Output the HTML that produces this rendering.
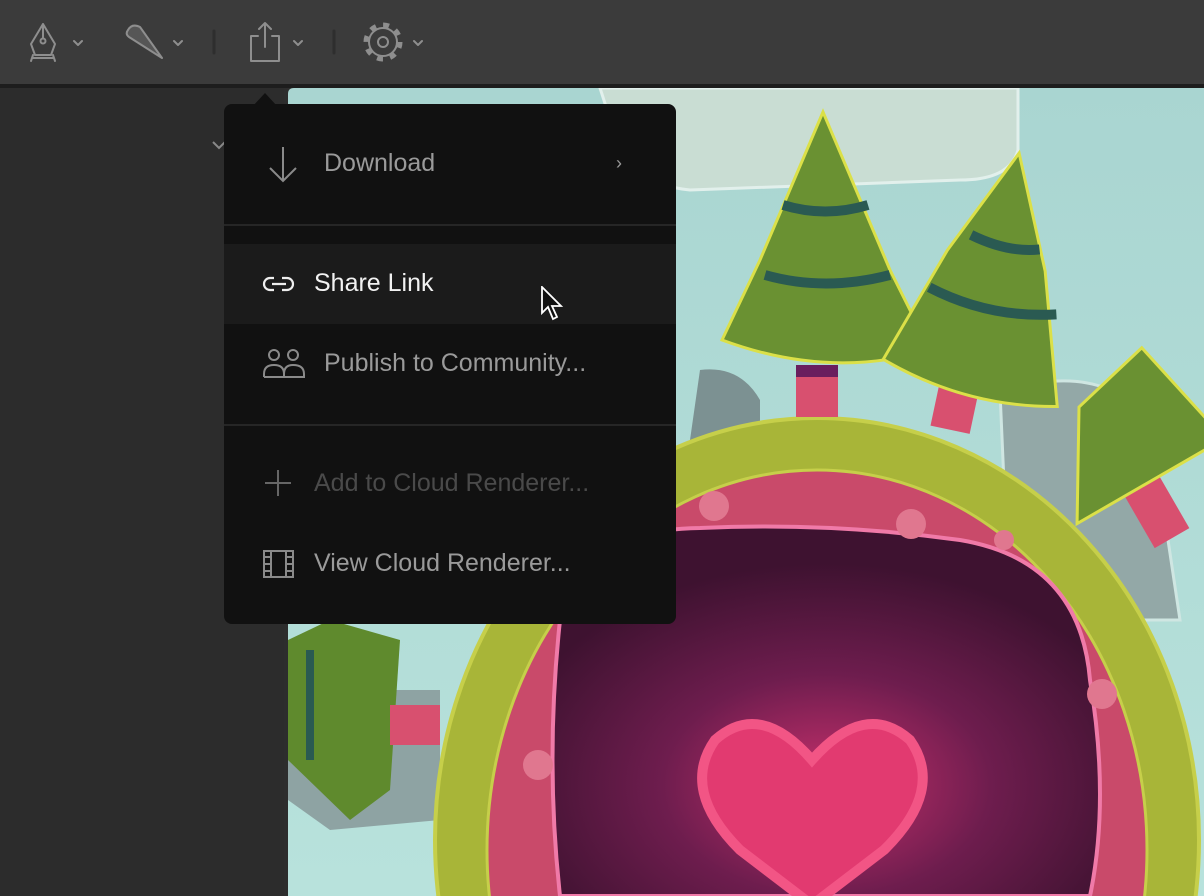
<!DOCTYPE html>
<html style="overflow:hidden"><head><style>
html,body{overflow:hidden}
body{margin:0;width:1204px;height:896px;background:#2d2d2d;font-family:"Liberation Sans",sans-serif;position:relative}
.tb{position:absolute;left:0;top:0;width:1204px;height:84px;background:#3b3b3b}
.line{position:absolute;left:0;top:84px;width:1204px;height:4px;background:#1d1d1d}
.side{position:absolute;left:0;top:88px;width:284px;height:808px;background:#2c2c2c}
.menu{position:absolute;left:224px;top:104px;width:452px;height:520px;background:#111;border-radius:8px;overflow:hidden}
.row{position:absolute;left:0;width:452px;height:80px;font-size:25px;color:#9a9a9a}
.row span{position:absolute;top:25px;white-space:nowrap}
.row svg{position:absolute}
.sep{position:absolute;left:0;width:452px;height:2px;background:#262626}
</style></head><body>
<div class="tb">
<svg width="450" height="84" viewBox="0 0 450 84" fill="none" stroke="#8e8e8e" stroke-width="2" stroke-linecap="round" stroke-linejoin="round">
<path d="M43 24 L31 44 L35 55 L51 55 L55 44 Z M43 24 V38"/><circle cx="43" cy="41" r="2.5"/><path d="M31 61 L33 55 M55 61 L53 55 M33 58 H53"/>
<path d="M74 41 l4 4 4-4 M174 41 l4 4 4-4 M294 41 l4 4 4-4 M414 41 l4 4 4-4"/>
<path d="M128 30 Q132 23 140 27 L162 58 L129 37 Q125 34 128 30Z" fill="#565656"/>
<path d="M214 31 V53 M334 31 V53" stroke="#2e2e2e" stroke-width="3"/>
<path d="M258 36 H251 V61 H279 V36 H272 M265 23 V47 M259 29 L265 23 271 29"/>
<circle cx="383" cy="42" r="17" stroke-width="5" stroke-dasharray="6 7.35" stroke-linecap="butt"/>
<circle cx="383" cy="42" r="14" fill="#3b3b3b"/>
<circle cx="383" cy="42" r="5"/>
</svg>
</div>
<div class="line"></div>
<div class="side"><svg width="20" height="20" style="position:absolute;left:210px;top:48px"><path d="M3 6 l6 6 6-6" stroke="#888" stroke-width="2" fill="none"/></svg></div>
<svg width="916" height="808" viewBox="288 88 916 808" style="position:absolute;left:288px;top:88px;overflow:hidden">
<defs><radialGradient id="in" cx="0.5" cy="0.7" r="0.6"><stop offset="0" stop-color="#c8306c"/><stop offset="0.5" stop-color="#6e1d4e"/><stop offset="1" stop-color="#3e1230"/></radialGradient>
<linearGradient id="sky" x1="0" y1="0" x2="0" y2="1"><stop offset="0" stop-color="#a9d5d1"/><stop offset="1" stop-color="#b8e2dc"/></linearGradient></defs>
<path d="M294 88 H1204 V896 H288 V94 Q288 88 294 88Z" fill="url(#sky)"/>
<path d="M600 88 H1018 V150 Q1010 180 960 180 L690 190 Q640 185 620 150Z" fill="#c9ddd3" stroke="#e2f0ec" stroke-width="3"/>
<path d="M1000 392 Q1100 360 1150 420 L1180 620 L1010 620Z" fill="#93a8a7" stroke="#cfe6e2" stroke-width="3"/>
<path d="M700 370 Q740 365 760 400 L760 440 L690 440Z" fill="#7c9192"/>
<path d="M288 690 L440 690 L440 820 L330 830 L288 800Z" fill="#8ea3a3"/>
<ellipse cx="817" cy="840" rx="382" ry="422" fill="#a8b538" stroke="#c6cf4a" stroke-width="4"/>
<ellipse cx="817" cy="850" rx="330" ry="380" fill="#c94a6a" stroke="#c6cf4a" stroke-width="3"/>
<path d="M560 620 Q570 530 700 528 Q830 522 960 540 Q1080 560 1090 680 Q1110 800 1090 896 L560 896 Q545 760 560 620Z" fill="url(#in)" stroke="#f07aa8" stroke-width="4"/>
<circle cx="714" cy="506" r="15" fill="#e0778f"/><circle cx="911" cy="524" r="15" fill="#e0778f"/><circle cx="1004" cy="540" r="10" fill="#e0778f"/><circle cx="1102" cy="694" r="15" fill="#e0778f"/><circle cx="538" cy="765" r="15" fill="#e0778f"/>
<path d="M812 760 Q760 700 715 740 Q680 790 740 850 L812 905 L884 850 Q945 790 910 740 Q865 700 812 760Z" fill="#e23a70" stroke="#f25585" stroke-width="10"/>
<rect x="796" y="365" width="42" height="52" fill="#d8506f"/><rect x="796" y="365" width="42" height="12" fill="#6a1e5e"/>
<path d="M823 112 L890 270 L930 350 Q830 380 722 340 L760 260Z" fill="#6a9132" stroke="#dbe048" stroke-width="3"/>
<path d="M783 205 Q825 218 868 205 M765 275 Q825 292 890 275" stroke="#2a5a52" stroke-width="10" fill="none"/>
<g transform="rotate(12 990 290)"><rect x="960" y="365" width="40" height="70" fill="#d8506f"/><rect x="960" y="365" width="40" height="12" fill="#6a1e5e"/>
<path d="M990 150 L1040 260 L1080 390 Q990 410 900 380 L940 260Z" fill="#6a9132" stroke="#dbe048" stroke-width="3"/>
<path d="M960 240 Q1000 250 1030 240 M930 300 Q995 318 1060 300" stroke="#2a5a52" stroke-width="10" fill="none"/></g>
<g transform="rotate(-30 1150 470)"><rect x="1115" y="470" width="40" height="70" fill="#d8506f"/><path d="M1060 480 L1120 380 L1204 360 L1230 480Z" fill="#6a9132" stroke="#dbe048" stroke-width="3"/></g>
<path d="M288 640 L330 620 L400 640 L390 790 L350 820 L288 760Z" fill="#5f8a2d"/>
<path d="M310 650 L310 760" stroke="#2a5a52" stroke-width="8"/>
<rect x="390" y="705" width="50" height="40" fill="#d8506f"/>
</svg>
<svg width="30" height="16" style="position:absolute;left:250px;top:90px"><path d="M3 16 L15 3 L27 16Z" fill="#111"/></svg>
<div class="menu">
<div class="row" style="top:20px"><svg width="40" height="40" style="left:40px;top:20px"><path d="M19 3 V37 M6 24 L19 37 L32 24" stroke="#8a8a8a" stroke-width="2" fill="none"/></svg><span style="left:100px">Download</span><span style="left:392px;font-size:18px;top:29px">›</span></div>
<div class="sep" style="top:120px"></div>
<div class="row" style="top:140px;background:#1b1b1b;color:#f2f2f2"><svg width="34" height="20" style="left:38px;top:30px"><path d="M12 4 H8 a6 6 0 0 0 0 12 H12 M20 4 H25 a6 6 0 0 1 0 12 H20 M10 10 H24" stroke="#eee" stroke-width="2.2" fill="none"/></svg><span style="left:90px">Share Link</span></div>
<div class="row" style="top:220px"><svg width="42" height="30" style="left:39px;top:24px" fill="none" stroke="#8a8a8a" stroke-width="2"><circle cx="11" cy="7" r="5"/><circle cx="30" cy="7" r="5"/><path d="M1 29 V26 Q1 17 11 17 Q21 17 21 26 V29 H41 V26 Q41 17 30 17 Q21 17 21 26 M1 29 H21"/></svg><span style="left:100px">Publish to Community...</span></div>
<div class="sep" style="top:320px"></div>
<div class="row" style="top:340px;color:#4a4a4a"><svg width="30" height="30" style="left:40px;top:25px"><path d="M14 1 V27 M1 14 H27" stroke="#666" stroke-width="2"/></svg><span style="left:90px">Add to Cloud Renderer...</span></div>
<div class="row" style="top:420px"><svg width="32" height="28" style="left:39px;top:26px" fill="none" stroke="#8a8a8a" stroke-width="2"><rect x="1" y="1" width="29" height="26"/><path d="M8 1 V27 M23 1 V27 M1 7 H8 M1 14 H8 M1 21 H8 M23 7 H30 M23 14 H30 M23 21 H30"/></svg><span style="left:90px">View Cloud Renderer...</span></div>
</div>
<svg width="26" height="36" style="position:absolute;left:540px;top:286px"><path d="M2 1 L2 27 L8 21 L13 33 L17 31 L12 20 L21 20Z" fill="#111" stroke="#fff" stroke-width="1.8"/></svg>
</body></html>
